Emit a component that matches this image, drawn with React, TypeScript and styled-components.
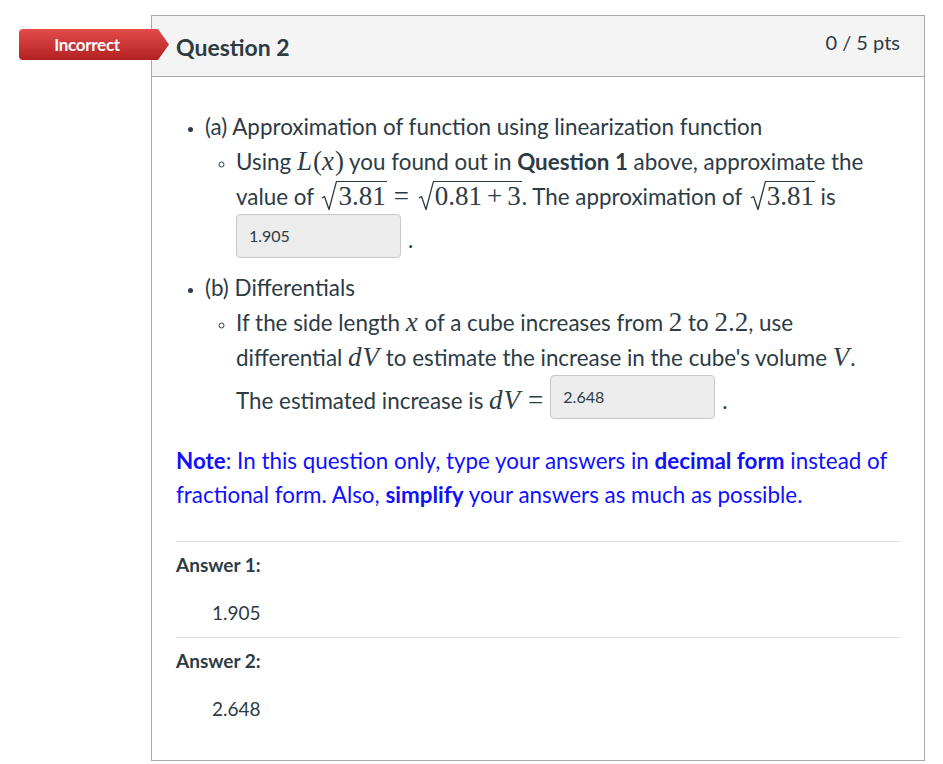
import styled, { createGlobalStyle } from "styled-components";

const GlobalStyle = createGlobalStyle`
  body {
    margin: 0;
    background: #ffffff;
    font-family: Lato, "Open Sans", sans-serif;
    color: #2d3b45;
  }
`;

const Page = styled.div`
  padding: 15px 0 0 151px;
`;

const Card = styled.div`
  position: relative;
  width: 774px;
  height: 746px;
  box-sizing: border-box;
  border: 1px solid #a9a9a9;
`;

const Badge = styled.div`
  position: absolute;
  left: -133px;
  top: 13px;
  width: 150px;
  height: 31px;
  box-sizing: border-box;
  padding-right: 14px;
  display: flex;
  align-items: center;
  justify-content: center;
  background: linear-gradient(#e44b4b, #b32121);
  border-radius: 4px 0 0 4px;
  clip-path: polygon(0 0, calc(100% - 11px) 0, 100% 50%, calc(100% - 11px) 100%, 0 100%);
  color: #ffffff;
  font-weight: 700;
  font-size: 17px;
  letter-spacing: -0.3px;
`;

const Header = styled.div`
  height: 60px;
  background: #f4f4f4;
  border-bottom: 1px solid #a9a9a9;
  display: flex;
  justify-content: space-between;
  padding: 0 24px;
`;

const Title = styled.h2`
  margin: 0;
  padding-top: 17px;
  font-size: 23px;
  font-weight: 700;
  color: #2d3b45;
`;

const Points = styled.div`
  padding-top: 14px;
  font-size: 20px;
  color: #2d3b45;
`;

const Body = styled.div`
  padding: 33px 24px 0;
  font-size: 22.4px;
  line-height: 34px;
`;

const List = styled.ul<{ $kind: "disc" | "circle" }>`
  margin: 0;
  padding-left: ${(p) => (p.$kind === "disc" ? "29px" : "31px")};
  list-style-type: ${(p) => p.$kind};

  & > li::marker {
    font-size: 15px;
  }
`;

const Item = styled.li`
  margin-bottom: 13px;
`;

const mathFont = `"Liberation Serif", "DejaVu Serif", serif`;

const MathVar = styled.span`
  font-family: ${mathFont};
  font-style: italic;
  font-size: 27px;
  letter-spacing: 1px;
`;

const MathNum = styled.span`
  font-family: ${mathFont};
  font-size: 27px;
`;

const MathOp = styled.span<{ $tight?: boolean }>`
  font-family: ${mathFont};
  font-size: 27px;
  margin: 0 ${(p) => (p.$tight ? "5px" : "7px")};
`;

const SqrtWrap = styled.span`
  display: inline-flex;
  align-items: stretch;
  vertical-align: -6px;
  line-height: 1;
  margin-left: 2px;
`;

const SqrtBody = styled.span`
  border-top: 1.2px solid #2d3b45;
  padding: 1px 1px 1px;
  font-family: ${mathFont};
  font-size: 27px;
`;

const Sqrt = ({ children }: { children: React.ReactNode }) => (
  <SqrtWrap>
    <svg width="16" height="30" viewBox="0 0 16 30" style={{ display: "block" }}>
      <path
        d="M1 17 L3.5 15.5 L8 28.5 L15.4 0.6 L16 0.6"
        fill="none"
        stroke="#2d3b45"
        strokeWidth="1.3"
        strokeLinejoin="round"
      />
    </svg>
    <SqrtBody>{children}</SqrtBody>
  </SqrtWrap>
);

const AnswerBox = styled.span`
  display: inline-block;
  overflow: hidden;
  vertical-align: -10px;
  width: 165px;
  height: 44px;
  box-sizing: border-box;
  padding: 0 12px;
  background: #ececec;
  border: 1px solid #c8c8c8;
  border-radius: 4px;
  font-size: 16px;
  line-height: 42px;
  color: #2d3b45;
  margin-right: 7px;
`;

const Note = styled.p`
  margin: 25px 0 0;
  color: #1010ff;
`;

const Answers = styled.div`
  margin-top: 29px;
`;

const AnswerRow = styled.div`
  border-top: 1px solid #dcdcdc;
  padding: 11px 0 12px;
`;

const AnswerLabel = styled.div`
  font-size: 19px;
  font-weight: 700;
  line-height: 24px;
`;

const AnswerValue = styled.div`
  font-size: 19px;
  line-height: 24px;
  margin: 24px 0 0 36px;
`;

export default function App() {
  return (
    <>
      <GlobalStyle />
      <Page>
        <Card>
          <Badge>Incorrect</Badge>
          <Header>
            <Title>Question 2</Title>
            <Points>0 / 5 pts</Points>
          </Header>
          <Body>
            <List $kind="disc">
              <Item>
                (a) Approximation of function using linearization function
                <List $kind="circle">
                  <li>
                    Using <MathVar>L</MathVar>
                    <MathNum>(</MathNum>
                    <MathVar>x</MathVar>
                    <MathNum>)</MathNum> you found out in <b>Question 1</b> above, approximate the
                    value of <Sqrt>3.81</Sqrt>
                    <MathOp>=</MathOp>
                    <Sqrt>
                      0.81
                      <MathOp $tight>+</MathOp>3
                    </Sqrt>
                    . The approximation of <Sqrt>3.81</Sqrt> is <AnswerBox>1.905</AnswerBox>.
                  </li>
                </List>
              </Item>
              <Item>
                (b) Differentials
                <List $kind="circle">
                  <li>
                    If the side length <MathVar>x</MathVar> of a cube increases from{" "}
                    <MathNum>2</MathNum> to <MathNum>2.2</MathNum>, use differential{" "}
                    <MathVar>dV</MathVar> to estimate the increase in the cube's volume{" "}
                    <MathVar>V</MathVar>.
                    <br />
                    The estimated increase is <MathVar>dV</MathVar>
                    <MathOp>=</MathOp>
                    <AnswerBox>2.648</AnswerBox>.
                  </li>
                </List>
              </Item>
            </List>
            <Note>
              <b>Note</b>: In this question only, type your answers in <b>decimal form</b> instead of
              fractional form. Also, <b>simplify</b> your answers as much as possible.
            </Note>
            <Answers>
              <AnswerRow>
                <AnswerLabel>Answer 1:</AnswerLabel>
                <AnswerValue>1.905</AnswerValue>
              </AnswerRow>
              <AnswerRow>
                <AnswerLabel>Answer 2:</AnswerLabel>
                <AnswerValue>2.648</AnswerValue>
              </AnswerRow>
            </Answers>
          </Body>
        </Card>
      </Page>
    </>
  );
}
